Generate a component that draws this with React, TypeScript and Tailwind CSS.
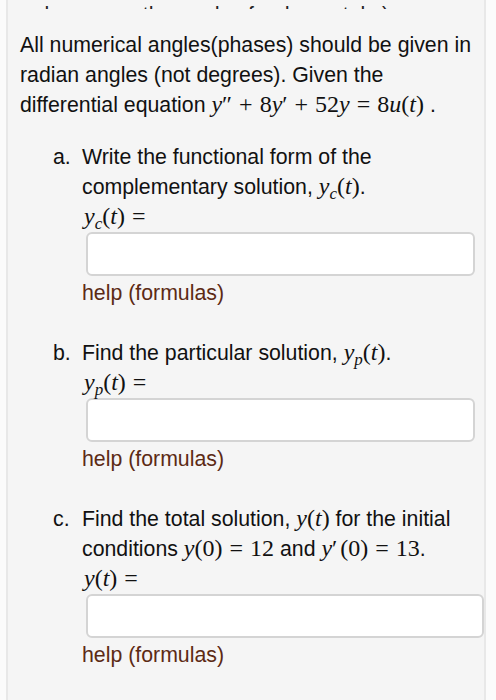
import type { ReactNode } from 'react'

const serif = "font-['Liberation_Serif',serif]"

function M({ children }: { children: ReactNode }) {
  return <span className={`${serif} text-[24px] leading-none`}>{children}</span>
}

function I({ children }: { children: ReactNode }) {
  return <i className="italic">{children}</i>
}

// binary operator / relation with TeX-like spacing
function Op({ children }: { children: ReactNode }) {
  return <span className="mx-[7px]">{children}</span>
}

function Sub({ children }: { children: ReactNode }) {
  return <span className="italic text-[17px] relative top-[5px] leading-none">{children}</span>
}

function AnswerBox({ wide }: { wide?: boolean }) {
  return (
    <div
      className={`h-[44px] ml-[4px] rounded-[6px] border-2 border-[#d4d4d4] bg-white ${wide ? 'w-[398px]' : 'w-[389px]'}`}
    />
  )
}

function Help() {
  return <div className="mt-[2px] text-[#5c2a14] leading-[30px]">help (formulas)</div>
}

function Part({ label, children }: { label: string; children: ReactNode }) {
  return (
    <div className="flex">
      <div className="w-[29px] shrink-0 leading-[30px]">{label}</div>
      <div className="flex-1">{children}</div>
    </div>
  )
}

export default function App() {
  return (
    <div className="w-[496px] h-[700px] overflow-hidden bg-[#fbfbfb] font-['Liberation_Sans',Arial,sans-serif] text-[21.3px] text-[#111]">
      <div className="ml-[6px] w-[480px] h-full bg-[#f5f5f5] border-l-2 border-r-2 border-[#e8e8e8]">
        <div className="h-[9px] overflow-hidden relative">
          <div className="absolute bottom-0 left-[14px] leading-[30px] text-[#222] whitespace-nowrap">
            <span className="relative top-[21px]">solve y para the modes fundamental y)</span>
          </div>
        </div>
        <div className="pl-[12px] pt-[21px] leading-[30px] w-[466px]">
          <p>
            All numerical angles(phases) should be given in radian angles (not degrees). Given the
            differential equation{' '}
            <M>
              <I>y</I>″<Op>+</Op>8<I>y</I>′<Op>+</Op>52<I>y</I>
              <Op>=</Op>8<I>u</I>(<I>t</I>)
            </M>{' '}
            .
          </p>
        </div>
        <div className="pl-[45px] pr-[4px] mt-[22px] flex flex-col gap-[30px]">
          <Part label="a.">
            <div className="leading-[30px]">
              Write the functional form of the complementary solution,{' '}
              <M>
                <I>y</I>
                <Sub>c</Sub>(<I>t</I>)
              </M>
              .
            </div>
            <div className="leading-[30px] pl-[2px]">
              <M>
                <I>y</I>
                <Sub>c</Sub>(<I>t</I>)<Op>=</Op>
              </M>
            </div>
            <AnswerBox />
            <Help />
          </Part>
          <Part label="b.">
            <div className="leading-[30px]">
              Find the particular solution,{' '}
              <M>
                <I>y</I>
                <Sub>p</Sub>(<I>t</I>)
              </M>
              .
            </div>
            <div className="leading-[30px] pl-[2px]">
              <M>
                <I>y</I>
                <Sub>p</Sub>(<I>t</I>)<Op>=</Op>
              </M>
            </div>
            <AnswerBox />
            <Help />
          </Part>
          <Part label="c.">
            <div className="leading-[30px]">
              Find the total solution,{' '}
              <M>
                <I>y</I>(<I>t</I>)
              </M>{' '}
              for the initial conditions{' '}
              <M>
                <I>y</I>(0)<Op>=</Op>12
              </M>{' '}
              and{' '}
              <M>
                <I>y</I>′<span className="ml-[3px]">(0)</span>
                <Op>=</Op>13
              </M>
              .
            </div>
            <div className="leading-[30px] pl-[2px]">
              <M>
                <I>y</I>(<I>t</I>)<Op>=</Op>
              </M>
            </div>
            <AnswerBox wide />
            <Help />
          </Part>
        </div>
      </div>
    </div>
  )
}
